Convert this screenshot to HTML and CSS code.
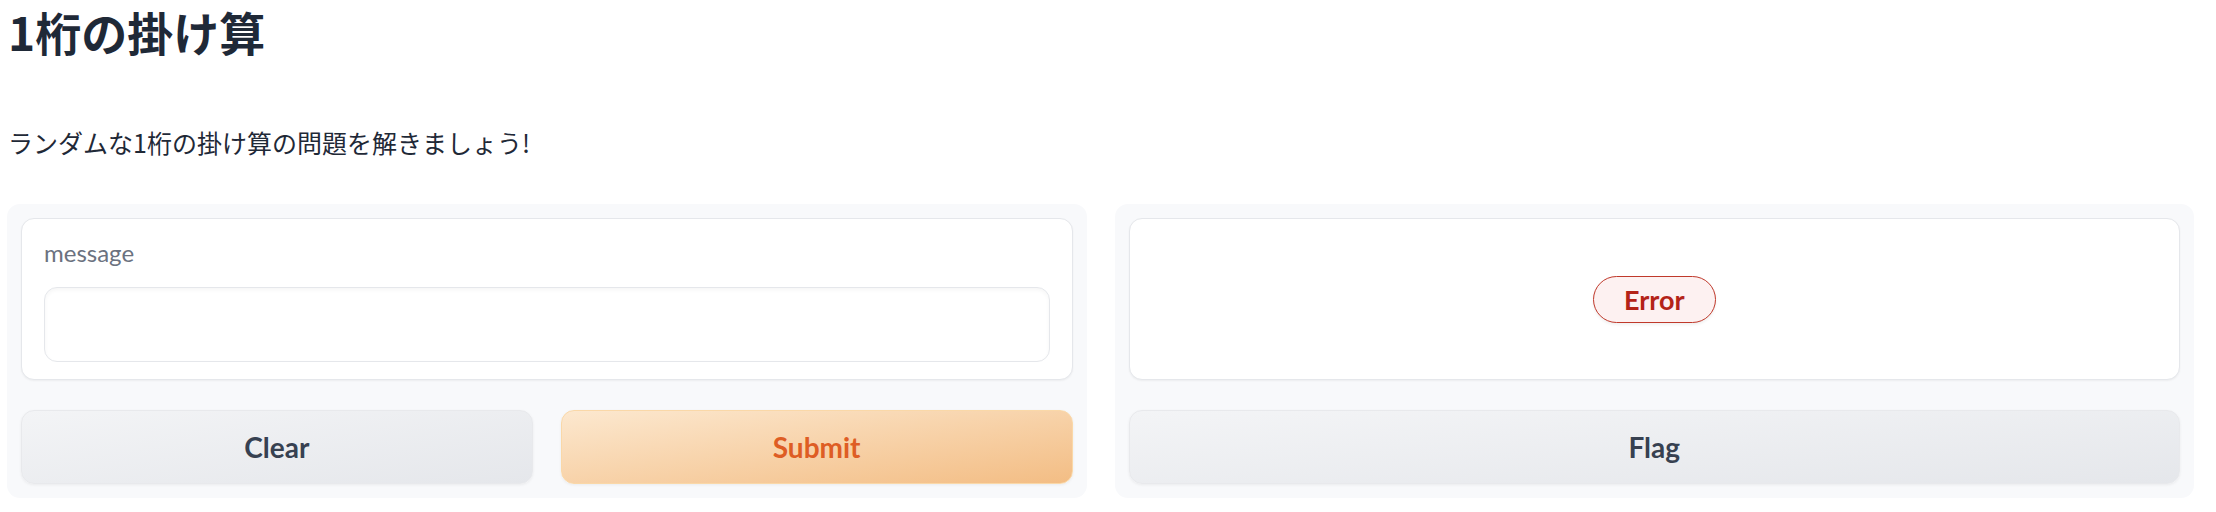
FILE: index.html
```html
<!DOCTYPE html>
<html lang="ja">
<head>
<meta charset="utf-8">
<title>1桁の掛け算</title>
<link rel="stylesheet" href="styles.css">
</head>
<body>
<div class="page">
  <h1 class="title">1桁の掛け算</h1>
  <p class="desc">ランダムな1桁の掛け算の問題を解きましょう!</p>
  <div class="row">
    <div class="panel">
      <div class="card input-card">
        <label class="label">message</label>
        <div class="textbox"></div>
      </div>
      <div class="btn-row">
        <button class="btn secondary">Clear</button>
        <button class="btn primary">Submit</button>
      </div>
    </div>
    <div class="panel">
      <div class="card output-card">
        <span class="badge">Error</span>
      </div>
      <button class="btn secondary full">Flag</button>
    </div>
  </div>
</div>
</body>
</html>
```
FILE: styles.css
```css
html, body {
  margin: 0;
  padding: 0;
  background: #ffffff;
}

body {
  font-family: "Lato", "Noto Sans CJK JP", sans-serif;
  color: #1f2937;
}

.page {
  padding: 0 22px 0 7px;
}

.title {
  font-family: "Noto Sans CJK JP", sans-serif;
  font-size: 46px;
  font-weight: 700;
  line-height: 54px;
  margin: 4px 0 0 1px;
  color: #1f2937;
}

.desc {
  font-family: "Noto Sans CJK JP", sans-serif;
  font-size: 25px;
  line-height: 37px;
  margin: 66px 0 0 1px;
  color: #1f2937;
}

.row {
  display: flex;
  gap: 28px;
  margin-top: 43px;
  align-items: stretch;
}

.panel {
  flex: 1 1 0;
  display: flex;
  flex-direction: column;
  gap: 30px;
  padding: 14px;
  background: #f8f9fb;
  border-radius: 13px;
}

.card {
  background: #ffffff;
  border: 1px solid #e5e7eb;
  border-radius: 13px;
  box-shadow: 0 1px 2px rgba(0, 0, 0, 0.05);
}

.input-card {
  display: flex;
  flex-direction: column;
  padding: 19px 22px 17px;
  gap: 19px;
}

.label {
  font-size: 24px;
  line-height: 30px;
  color: #6b7280;
}

.textbox {
  height: 75px;
  box-sizing: border-box;
  border: 1px solid #e5e7eb;
  border-radius: 13px;
  background: #ffffff;
  box-shadow: inset 0 2px 4px rgba(0, 0, 0, 0.04);
}

.output-card {
  flex: 1 1 auto;
  display: flex;
  align-items: center;
  justify-content: center;
}

.badge {
  font-size: 27px;
  font-weight: 700;
  line-height: 45px;
  padding: 0 30px;
  color: #b42318;
  background: #fdf1f1;
  border: 1px solid #c0392b;
  border-radius: 999px;
  box-shadow: 0 2px 3px rgba(0, 0, 0, 0.06);
}

.btn-row {
  display: flex;
  gap: 28px;
}

.btn {
  flex: 1 1 0;
  height: 74px;
  border-radius: 13px;
  font-family: "Lato", "Noto Sans CJK JP", sans-serif;
  font-size: 28px;
  font-weight: 700;
  cursor: pointer;
  box-shadow: 0 1px 3px rgba(0, 0, 0, 0.06);
}

.btn.full {
  flex: none;
  width: 100%;
}

.secondary {
  background: linear-gradient(to bottom right, #f3f4f6, #e5e7eb);
  border: 1px solid #e8e9ec;
  color: #374151;
}

.primary {
  background: linear-gradient(to bottom right, #fce8cf, #f3bd84);
  border: 1px solid #fad8a8;
  color: #de5d24;
}
```
